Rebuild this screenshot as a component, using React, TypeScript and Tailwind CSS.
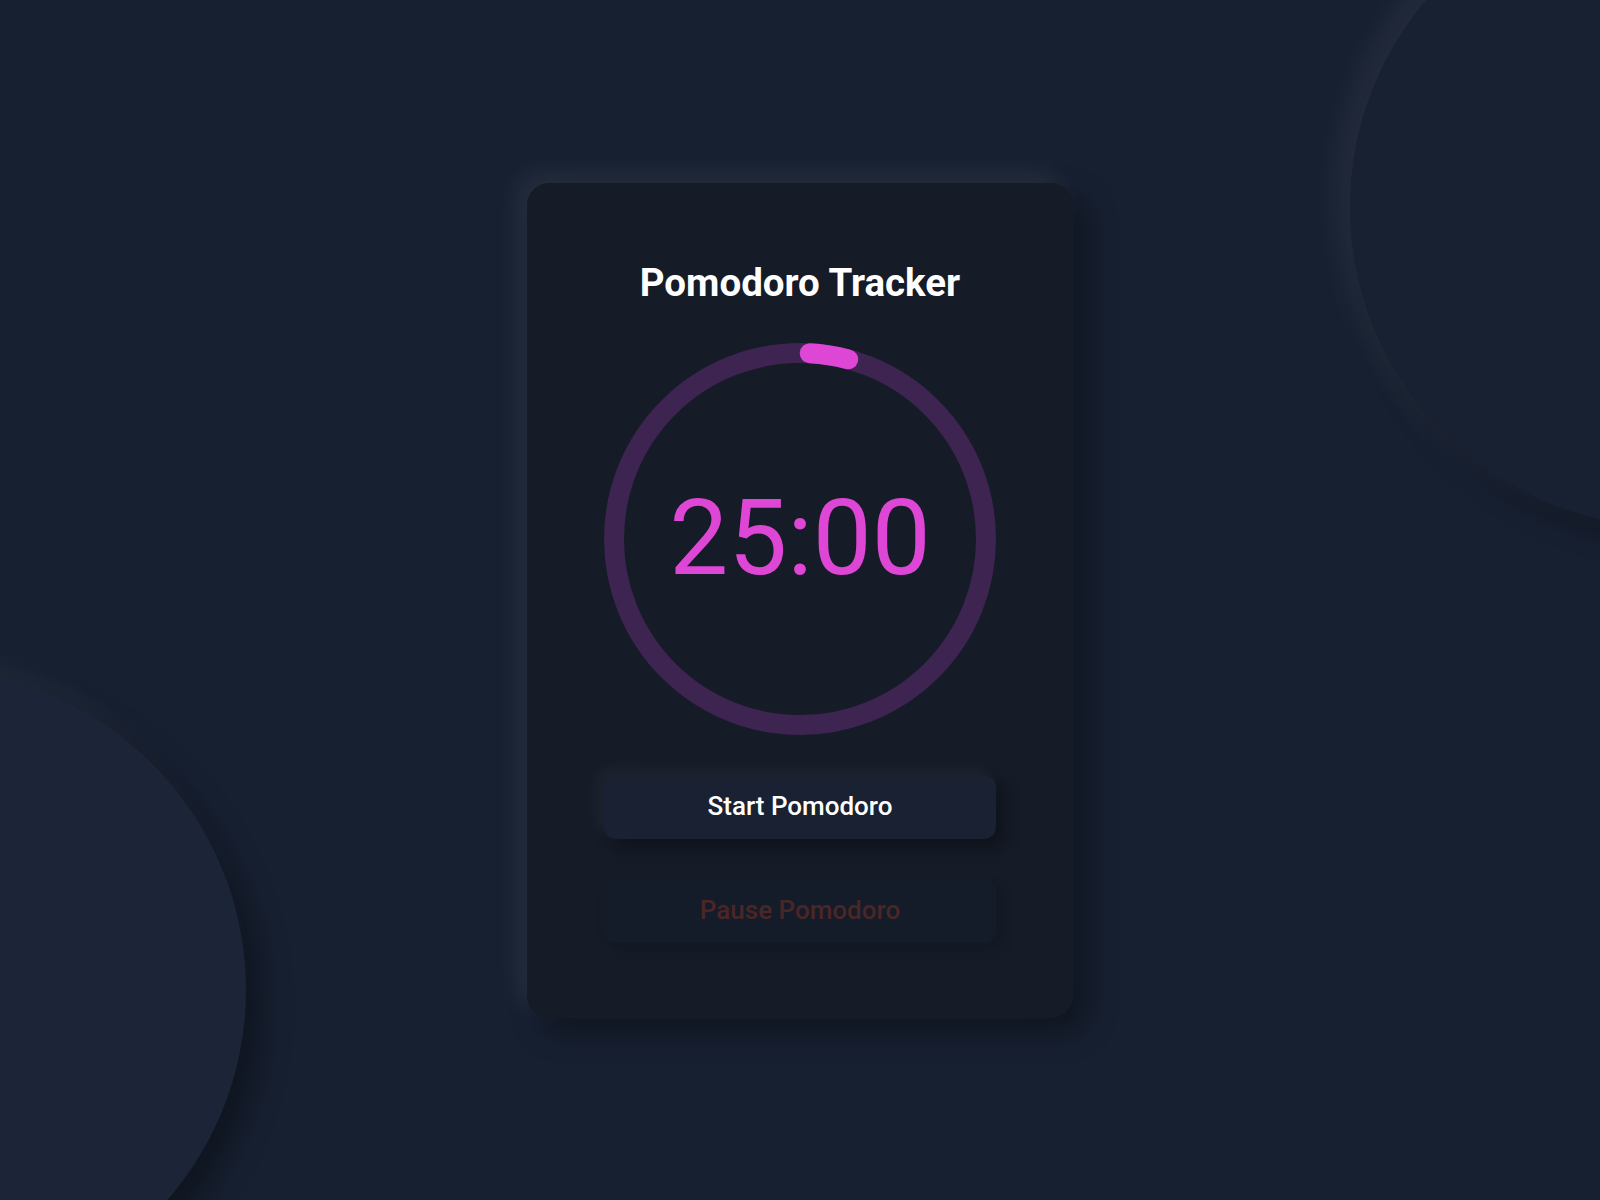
const RADIUS = 186;
const STROKE = 20;
const SIZE = 392;

// point on the ring, angle measured clockwise from 12 o'clock
function ringPoint(deg: number) {
  const rad = (deg * Math.PI) / 180;
  return {
    x: SIZE / 2 + RADIUS * Math.sin(rad),
    y: SIZE / 2 - RADIUS * Math.cos(rad),
  };
}

function ProgressRing({ from, to }: { from: number; to: number }) {
  const a = ringPoint(from);
  const b = ringPoint(to);
  return (
    <svg width={SIZE} height={SIZE} viewBox={`0 0 ${SIZE} ${SIZE}`} className="absolute inset-0">
      <circle cx={SIZE / 2} cy={SIZE / 2} r={RADIUS} fill="none" stroke="#3e2450" strokeWidth={STROKE} />
      <path
        d={`M ${a.x} ${a.y} A ${RADIUS} ${RADIUS} 0 0 1 ${b.x} ${b.y}`}
        fill="none"
        stroke="#de46d6"
        strokeWidth={STROKE}
        strokeLinecap="round"
      />
    </svg>
  );
}

export default function App() {
  return (
    <div className="relative h-screen w-full overflow-hidden bg-[#172031] font-['Roboto',sans-serif]">
      {/* background blobs */}
      <div className="absolute -right-[390px] -top-[113px] h-[640px] w-[640px] rounded-full bg-[#172132] shadow-[-14px_-10px_30px_rgba(255,255,255,0.06),14px_14px_30px_rgba(0,0,0,0.3)]" />
      <div className="absolute -left-[394px] top-[670px] h-[640px] w-[640px] rounded-full bg-[#1b2537] shadow-[-14px_-14px_30px_rgba(255,255,255,0.05),16px_16px_30px_rgba(0,0,0,0.35)]" />

      <div className="relative flex h-full items-center justify-center">
        <div className="flex h-[835px] w-[546px] flex-col items-center rounded-[22px] bg-[#151b27] pt-20 shadow-[-10px_-10px_24px_rgba(255,255,255,0.07),14px_14px_30px_rgba(0,0,0,0.35)]">
          <h1 className="h-10 text-[38.5px] font-bold leading-10 text-white">Pomodoro Tracker</h1>

          <div className="relative mt-10 flex h-[392px] w-[392px] items-center justify-center">
            <ProgressRing from={3} to={15} />
            <span className="relative text-[105px] font-normal leading-none text-[#de46d6]">25:00</span>
          </div>

          <button className="mt-10 h-16 w-[392px] rounded-xl bg-[#192132] text-[26px] font-medium text-white shadow-[-6px_-6px_16px_rgba(255,255,255,0.05),8px_8px_16px_rgba(0,0,0,0.35)]">
            Start Pomodoro
          </button>
          <button className="mt-10 h-16 w-[392px] rounded-xl bg-[#151c29] text-[26px] font-medium text-[#4b2626] shadow-[-4px_-4px_12px_rgba(255,255,255,0.015),6px_6px_14px_rgba(0,0,0,0.12)]">
            Pause Pomodoro
          </button>
        </div>
      </div>
    </div>
  );
}
